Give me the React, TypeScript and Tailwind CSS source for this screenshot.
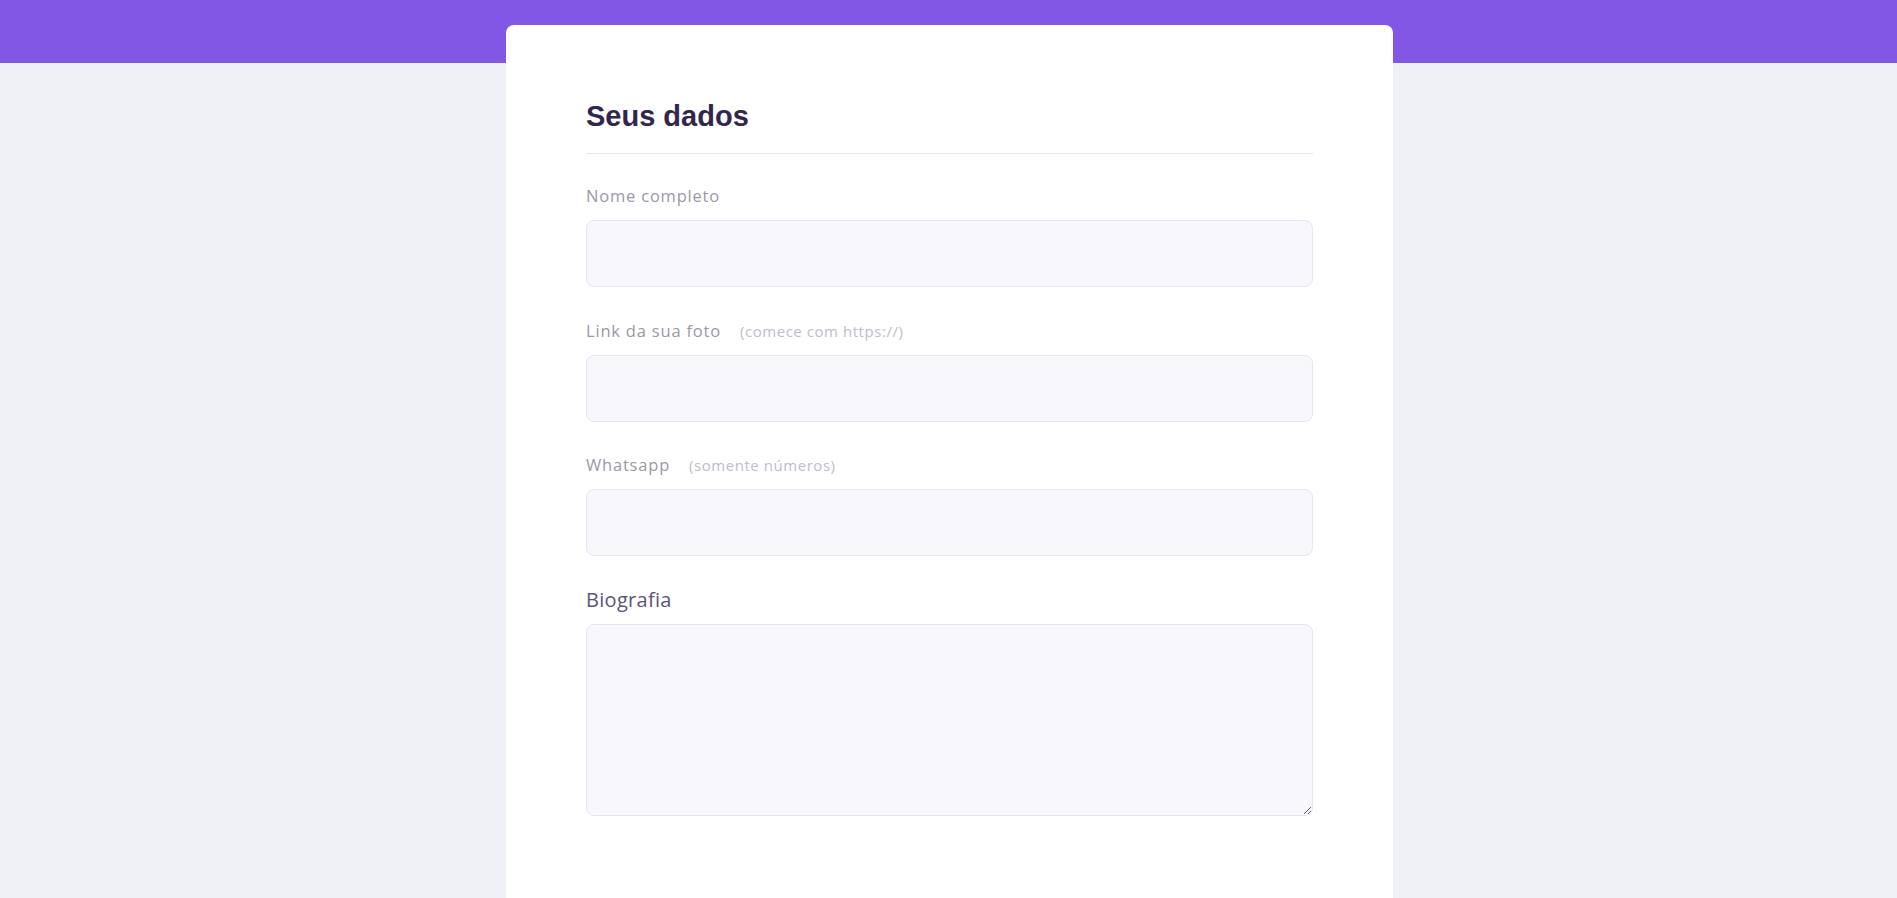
import React from 'react';

interface FieldProps {
  label: string;
  hint?: string;
}

function InputField({ label, hint }: FieldProps) {
  return (
    <div className="mt-[31.5px] first:mt-0">
      <label className="block text-[16.5px] leading-6 tracking-[0.8px] text-[#9c98a6] mb-3">
        {label}
        {hint && (
          <span className="ml-[19px] text-[15px] tracking-[0.55px] text-[#c1bccc]">{hint}</span>
        )}
      </label>
      <input
        type="text"
        className="block w-full h-[67px] rounded-lg border border-[#e6e6f0] bg-[#f8f8fc] px-6 text-[16px] text-[#6a6180] outline-none"
      />
    </div>
  );
}

export default function App() {
  return (
    <div
      className="min-h-screen bg-[#f0f0f7]"
      style={{ fontFamily: '"Open Sans", "Noto Sans", sans-serif' }}
    >
      <div className="h-[63px] bg-[#8257e5]" />

      <main className="relative mx-auto -mt-[38px] w-[887px] min-h-[873px] translate-x-[1px] rounded-t-lg bg-white px-20 pt-[74px] pb-24">
        <h2
          className="border-b border-[#e6e6f0] pb-5 text-[29px] font-bold leading-[34px] text-[#32264d]"
          style={{ fontFamily: '"Liberation Sans", Arial, sans-serif' }}
        >
          Seus dados
        </h2>

        <form className="mt-[30px]">
          <InputField label="Nome completo" />
          <InputField label="Link da sua foto" hint="(comece com https://)" />
          <InputField label="Whatsapp" hint="(somente números)" />

          <div className="mt-[30px]">
            <label className="block text-[20px] leading-7 tracking-[0.3px] text-[#5a5675] mb-[10px]">Biografia</label>
            <textarea className="block w-full h-[192px] rounded-lg border border-[#e6e6f0] bg-[#f8f8fc] px-6 py-4 text-[16px] text-[#6a6180] outline-none" />
          </div>
        </form>
      </main>
    </div>
  );
}
